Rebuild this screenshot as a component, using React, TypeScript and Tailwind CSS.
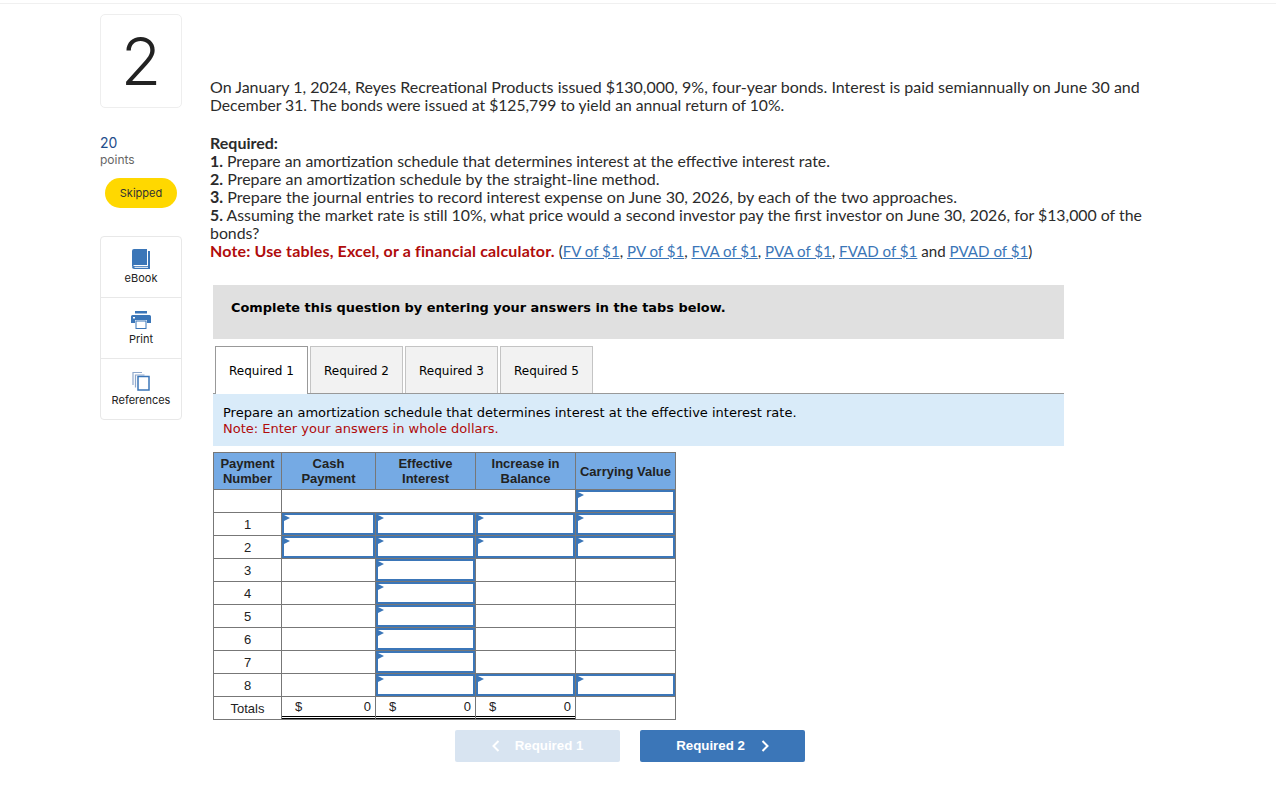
import React from "react";

const body = "font-['Lato','Open_Sans',sans-serif]";

function Tri() {
  return <span className="absolute left-0 top-0 w-0 h-0 border-y-[3.5px] border-l-[6px] border-y-transparent border-l-[#3b76b8]" />;
}

function Input() {
  return (
    <td className="border border-[#777] p-0 h-[23px]">
      <div className="relative h-[22px] border-2 border-[#3b76b8] bg-white">
        <Tri />
      </div>
    </td>
  );
}

function Plain({ children, className = "" }: { children?: React.ReactNode; className?: string }) {
  return <td className={"border border-[#777] p-0 h-[23px] text-center " + className}>{children}</td>;
}

function Money() {
  return (
    <td className="border border-[#777] border-t-black p-0 h-[23px]">
      <div className="h-[22px] flex items-center justify-between pl-[13px] pr-[4px] border-b-[3px] border-double border-black">
        <span>$</span>
        <span>0</span>
      </div>
    </td>
  );
}

const rows: [number, boolean, boolean, boolean, boolean][] = [
  [1, true, true, true, true],
  [2, true, true, true, true],
  [3, false, true, false, false],
  [4, false, true, false, false],
  [5, false, true, false, false],
  [6, false, true, false, false],
  [7, false, true, false, false],
  [8, false, true, true, true],
];

function Link({ children }: { children: React.ReactNode }) {
  return <a className="text-[#3b76b8] underline">{children}</a>;
}

function Tab({ label, active }: { label: string; active?: boolean }) {
  return (
    <div
      className={
        "w-[93px] flex items-center justify-center border border-b-0 text-[12px] text-black " +
        (active ? "bg-white border-[#999] h-[48px] pt-[1px] -mb-px z-10 relative" : "bg-[#f2f2f2] border-[#c4c4c4] h-[47px] pt-[2px]")
      }
    >
      {label}
    </div>
  );
}

function ToolCell({ label, icon, border }: { label: string; icon: React.ReactNode; border?: boolean }) {
  return (
    <div className={"h-[61px] flex flex-col items-center pt-[11px] " + (border ? "border-b border-[#e8e8e8]" : "")}>
      <div className="h-[22px] flex items-center">{icon}</div>
      <div className="mt-[1px] text-[11px] leading-[14px] text-[#222]">{label}</div>
    </div>
  );
}

const headers: [string, string][] = [
  ["Payment", "Number"],
  ["Cash", "Payment"],
  ["Effective", "Interest"],
  ["Increase in", "Balance"],
  ["Carrying Value", ""],
];

export default function App() {
  return (
    <div className={"min-h-[798px] bg-white text-[#2b2b2b] " + body}>
      <div className="h-[4px] border-b border-[#f0f0f0]" />
      <div className="flex pl-[100px] pt-[10px]">
        <aside className="w-[82px] shrink-0 font-['Inter',sans-serif]">
          <div className="h-[94px] rounded-[5px] border border-[#eeeeee] flex items-center justify-center text-[66px] font-light text-[#222] leading-none">
            2
          </div>
          <div className="mt-[27px] text-[14px] leading-[16px] text-[#1f4e8c]">20</div>
          <div className="text-[12px] leading-[17px] text-[#666]">points</div>
          <div className="mt-[10px] ml-[5px] w-[72px] h-[30px] rounded-full bg-[#ffd800] flex items-center justify-center text-[11px] text-[#333]">
            Skipped
          </div>
          <div className="mt-[28px] h-[184px] rounded-[4px] border border-[#e8e8e8]">
            <ToolCell
              border
              label="eBook"
              icon={
                <svg width="18" height="20" viewBox="0 0 18 20">
                  <path d="M0 2A2 2 0 0 1 2 0h13v16H2.5A1.5 1.5 0 0 0 1 17.5H0z" fill="#3b76b8" />
                  <path d="M16 2h2v18H2.5A2.5 2.5 0 0 1 0 17.5C0 17.8 1 17 2.5 17H16z" fill="#3b76b8" />
                  <path d="M2.5 18.3h13.5" stroke="#fff" strokeWidth="1" />
                </svg>
              }
            />
            <ToolCell
              border
              label="Print"
              icon={
                <svg width="20" height="18" viewBox="0 0 20 18">
                  <rect x="4" y="0" width="12" height="2.5" fill="#3b76b8" />
                  <path d="M1.5 4h17A1.5 1.5 0 0 1 20 5.5V12h-4V9H4v3H0V5.5A1.5 1.5 0 0 1 1.5 4z" fill="#3b76b8" />
                  <rect x="2" y="6" width="2" height="1.5" fill="#fff" />
                  <rect x="5" y="10" width="10" height="7.5" fill="#fff" stroke="#3b76b8" />
                </svg>
              }
            />
            <ToolCell
              label="References"
              icon={
                <svg width="18" height="20" viewBox="0 0 18 20">
                  <path d="M1 14V1.5h9" fill="none" stroke="#8fa8cc" strokeWidth="1.2" />
                  <path d="M3.5 16.5V4h9" fill="none" stroke="#8fa8cc" strokeWidth="1.2" />
                  <rect x="6" y="5.5" width="11" height="13.5" fill="#fff" stroke="#3b76b8" strokeWidth="1.5" />
                </svg>
              }
            />
          </div>
        </aside>

        <main className="ml-[28px] w-[950px] pt-[64px]">
          <div className="text-[16px] leading-[18px]">
            <p>On January 1, 2024, Reyes Recreational Products issued $130,000, 9%, four-year bonds. Interest is paid semiannually on June 30 and</p>
            <p className="text-[15.7px]">December 31. The bonds were issued at $125,799 to yield an annual return of 10%.</p>
          </div>
          <div className="mt-[20px] text-[16px] leading-[18px]">
            <div className="font-bold">Required:</div>
            <div className="text-[15.82px]"><b>1.</b> Prepare an amortization schedule that determines interest at the effective interest rate.</div>
            <div><b>2.</b> Prepare an amortization schedule by the straight-line method.</div>
            <div className="text-[16.08px]"><b>3.</b> Prepare the journal entries to record interest expense on June 30, 2026, by each of the two approaches.</div>
            <div className="text-[15.86px]"><b>5.</b> Assuming the market rate is still 10%, what price would a second investor pay the first investor on June 30, 2026, for $13,000 of the<br />bonds?</div>
            <div>
              <b className="text-[#b00c0c] tracking-[0.15px]">Note: Use tables, Excel, or a financial calculator.</b>{" "}
              <span className="text-[15.1px]">(<Link>FV of $1</Link>, <Link>PV of $1</Link>, <Link>FVA of $1</Link>, <Link>PVA of $1</Link>, <Link>FVAD of $1</Link> and <Link>PVAD of $1</Link>)</span>
            </div>
          </div>

          <div className="ml-[3px] mt-[25px] w-[851px] font-['DejaVu_Sans',sans-serif]">
            <div className="h-[54px] bg-[#e0e0e0] flex items-center pl-[18px] pb-[8px] text-[12.92px] font-bold text-black">
              Complete this question by entering your answers in the tabs below.
            </div>
            <div className="mt-[7px] pl-[2px] h-[48px] flex items-end gap-[2px] border-b border-[#999]">
              <Tab active label="Required 1" />
              <Tab label="Required 2" />
              <Tab label="Required 3" />
              <Tab label="Required 5" />
            </div>
            <div className="h-[52px] bg-[#d9ebf9] pl-[10px] pt-[11px] text-[13px] leading-[16px] text-black">
              <div>Prepare an amortization schedule that determines interest at the effective interest rate.</div>
              <div className="text-[#b00c0c]">Note: Enter your answers in whole dollars.</div>
            </div>
          </div>

          <table className="ml-[3px] mt-[6px] w-[463px] table-fixed border-collapse font-['Liberation_Sans',sans-serif] text-[13px] leading-[15px] text-[#222]">
            <colgroup>
              <col className="w-[68px]" />
              <col className="w-[94px]" />
              <col className="w-[100px]" />
              <col className="w-[100px]" />
              <col className="w-[100px]" />
            </colgroup>
            <thead>
              <tr className="bg-[#75aae4] font-bold">
                {headers.map(([a, b]) => (
                  <th key={a} className="border border-[#777] h-[37px] p-0 text-center font-bold text-[#222]">
                    {a}
                    {b && <br />}
                    {b}
                  </th>
                ))}
              </tr>
            </thead>
            <tbody>
              <tr>
                <Plain />
                <td colSpan={3} className="border border-[#777] p-0 h-[23px]" />
                <Input />
              </tr>
              {rows.map(([n, a, b, c, d]) => (
                <tr key={n}>
                  <Plain>{n}</Plain>
                  {a ? <Input /> : <Plain />}
                  {b ? <Input /> : <Plain />}
                  {c ? <Input /> : <Plain />}
                  {d ? <Input /> : <Plain />}
                </tr>
              ))}
              <tr>
                <Plain>Totals</Plain>
                <Money />
                <Money />
                <Money />
                <Plain />
              </tr>
            </tbody>
          </table>

          <div className="ml-[245px] mt-[10px] flex gap-[20px] font-['Liberation_Sans',sans-serif] text-[13.3px] font-bold text-white">
            <div className="w-[165px] h-[32px] rounded-[2px] bg-[#d8e4f1] flex items-center justify-center gap-[15px]">
              <svg width="8" height="12" viewBox="0 0 8 12"><path d="M6.5 1 1.5 6l5 5" fill="none" stroke="#fff" strokeWidth="2" /></svg>
              Required 1
            </div>
            <div className="w-[165px] h-[32px] rounded-[2px] bg-[#3b76b8] flex items-center justify-center gap-[16px]">
              Required 2
              <svg width="8" height="12" viewBox="0 0 8 12"><path d="M1.5 1l5 5-5 5" fill="none" stroke="#fff" strokeWidth="2" /></svg>
            </div>
          </div>
        </main>
      </div>
    </div>
  );
}
